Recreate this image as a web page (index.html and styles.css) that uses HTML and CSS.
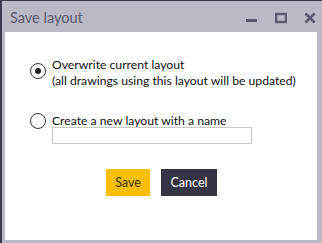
FILE: index.html
```html
<!DOCTYPE html>
<html lang="en">
<head>
  <meta charset="UTF-8">
  <title>Save layout</title>
  <link rel="stylesheet" href="styles.css">
</head>
<body>

<div class="window">
  <div class="titlebar">
    <span class="title">Save layout</span>
    <div class="controls">
      <svg width="12" height="12" viewBox="0 0 12 12"><rect x="0" y="7" width="11" height="3" fill="#5b5a6e"/></svg>
      <svg width="12" height="12" viewBox="0 0 12 12"><rect x="1" y="2" width="10" height="8" fill="none" stroke="#5b5a6e" stroke-width="2.4"/></svg>
      <svg width="12" height="12" viewBox="0 0 12 12"><path d="M1.5 1.5 L10.5 10.5 M10.5 1.5 L1.5 10.5" stroke="#5b5a6e" stroke-width="2.6"/></svg>
    </div>
  </div>

  <div class="content">
    <label class="option first">
      <span class="radio checked"></span>
      <span class="label">Overwrite current layout<br>(all drawings using this layout will be updated)</span>
    </label>

    <label class="option second">
      <span class="radio"></span>
      <span class="label">Create a new layout with a name</span>
    </label>
    <input type="text" class="name-input">

    <div class="buttons">
      <button class="btn save">Save</button>
      <button class="btn cancel">Cancel</button>
    </div>
  </div>
</div>

</body>
</html>
```

FILE: styles.css
```css
body {
  margin: 0;
  font-family: "Lato", sans-serif;
  background-color: #bab9c5;
}
.window {
  width: 320px;
  height: 242px;
  background-color: #bab9c5;
  border-top: 1px solid #3b3b4b;
  border-left: 2px solid #3b3b4b;
  display: flex;
  flex-direction: column;
}
.titlebar {
  height: 31px;
  display: flex;
  align-items: center;
  justify-content: space-between;
  padding: 0 6px 0 8px;
}
.title {
  font-size: 14.5px;
  color: #5b5a6e;
  margin-top: 2px;
}
.controls {
  display: flex;
  gap: 17px;
  margin-top: 2px;
}
.content {
  flex: 1;
  background-color: white;
  margin: 0 5px 3px 3px;
  padding: 25px 0 0 25px;
  font-size: 12.2px;
  color: #111;
}
.option {
  display: flex;
  align-items: flex-start;
  gap: 6px;
}
.option.second {
  margin-top: 24px;
}
.label {
  line-height: 16px;
}
.radio {
  width: 14px;
  height: 14px;
  border: 1px solid #333;
  border-radius: 50%;
  flex-shrink: 0;
  display: flex;
  align-items: center;
  justify-content: center;
}
.option.first .radio {
  margin-top: 6px;
}
.radio.checked::after {
  content: "";
  width: 6px;
  height: 6px;
  border-radius: 50%;
  background-color: #222;
}
.name-input {
  display: block;
  width: 200px;
  height: 17px;
  box-sizing: border-box;
  margin: -2px 0 0 22px;
  border: 1px solid #c8c8c8;
  padding: 0;
}
.buttons {
  display: flex;
  gap: 11px;
  margin: 25px 0 0 76px;
}
.btn {
  height: 27px;
  border: none;
  font-family: "Lato", sans-serif;
  font-size: 12.5px;
  padding: 0;
}
.save {
  width: 44px;
  background-color: #fdbf00;
  color: #333;
}
.cancel {
  width: 56px;
  background-color: #353444;
  color: white;
}
```
